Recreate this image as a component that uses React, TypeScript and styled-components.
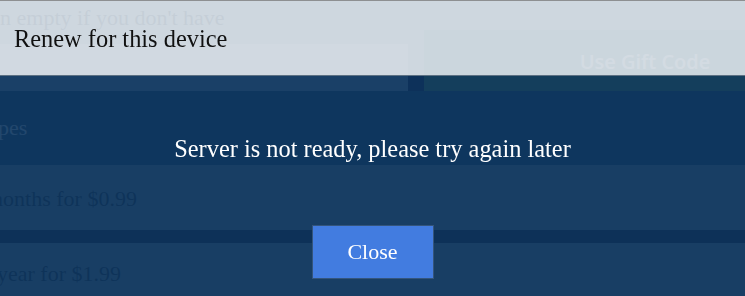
import React from "react";
import styled, { createGlobalStyle } from "styled-components";

const Global = createGlobalStyle`
  html, body {
    margin: 0;
    padding: 0;
    width: 745px;
    height: 296px;
    overflow: hidden;
    background: #0e365e;
    font-family: "Liberation Serif", "Times New Roman", serif;
  }
`;

/* ---------- underlying page (dimmed by the dialog) ---------- */

const Page = styled.div`
  width: 745px;
  height: 296px;
  overflow: hidden;
  background: #0e365e;
  display: flex;
  flex-direction: column;
  & > * {
    flex-shrink: 0;
  }
`;

const TopNote = styled.div`
  height: 30px;
  box-sizing: border-box;
  padding-top: 5px;
  background: #c8d2dc;
  color: #6e7d91;
  font-size: 22px;
  line-height: 26px;
  white-space: nowrap;
  overflow: hidden;
`;

const GiftRow = styled.div`
  height: 61px;
  display: flex;
  align-items: flex-end;
  gap: 16px;
  background: linear-gradient(to bottom, #c8d2dc 0 45px, #00003a 45px);
`;

const GiftInput = styled.div`
  width: 408px;
  height: 47px;
  flex-shrink: 0;
  background: linear-gradient(to bottom, #e6ebf0 0 31px, #869ab8 31px);
`;

const GiftButton = styled.div`
  width: 442px;
  height: 61px;
  flex-shrink: 0;
  box-sizing: border-box;
  padding-top: 1px;
  background: linear-gradient(to bottom, #b0c8cc 0 45px, #4a864a 45px);
  color: #ffffff;
  font-family: "Open Sans", "Liberation Sans", sans-serif;
  font-size: 20px;
  font-weight: 600;
  display: flex;
  align-items: center;
  justify-content: center;
`;

const SectionLabel = styled.div`
  height: 74px;
  box-sizing: border-box;
  padding-top: 6px;
  display: flex;
  align-items: center;
  color: #d0dcf0;
  font-size: 22px;
  text-indent: -2px;
  white-space: nowrap;
  border-bottom: 7px solid #0a325a;
`;

const OptionRow = styled.div<{ $h: number; $top: number; $indent: number }>`
  height: ${(p) => p.$h}px;
  box-sizing: border-box;
  padding-top: ${(p) => p.$top}px;
  background: #72869a;
  color: #101830;
  font-size: 22px;
  line-height: 25px;
  white-space: nowrap;
  overflow: hidden;
  text-indent: ${(p) => p.$indent}px;
`;

const Stripe = styled.div`
  height: 13px;
  background: #000022;
`;

/* ---------- dialog ---------- */

const Overlay = styled.div`
  position: fixed;
  inset: 0;
  display: flex;
  flex-direction: column;
`;

const DialogHeader = styled.div`
  height: 76px;
  flex-shrink: 0;
  box-sizing: border-box;
  display: flex;
  align-items: center;
  padding: 2px 0 0 14px;
  border-top: 1px solid #8d8f91;
  border-bottom: 1px solid #5d7183;
  background: rgba(206, 215, 223, 0.9);
  color: #111111;
  font-size: 24.4px;
`;

const DialogBody = styled.div`
  flex: 1;
  display: flex;
  flex-direction: column;
  align-items: center;
  padding-top: 59px;
  background: rgba(14, 54, 94, 0.9);
`;

const Message = styled.div`
  color: #ffffff;
  font-size: 24.4px;
  line-height: 28px;
`;

const CloseButton = styled.button`
  margin-top: 62px;
  width: 122px;
  height: 54px;
  box-sizing: border-box;
  border: 1px solid #34557c;
  background: #427ce0;
  color: #ffffff;
  font-family: "Liberation Serif", "Times New Roman", serif;
  font-size: 22px;
  padding: 0;
  cursor: pointer;
`;

export default function App() {
  return (
    <>
      <Global />
      <Page>
        <TopNote>n empty if you don't have</TopNote>
        <GiftRow>
          <GiftInput />
          <GiftButton>Use Gift Code</GiftButton>
        </GiftRow>
        <SectionLabel>pes</SectionLabel>
        <OptionRow $h={65} $top={21} $indent={-14}>
          months for $0.99
        </OptionRow>
        <Stripe />
        <OptionRow $h={60} $top={18} $indent={-3}>
          year for $1.99
        </OptionRow>
      </Page>
      <Overlay>
        <DialogHeader>Renew for this device</DialogHeader>
        <DialogBody>
          <Message>Server is not ready, please try again later</Message>
          <CloseButton>Close</CloseButton>
        </DialogBody>
      </Overlay>
    </>
  );
}
